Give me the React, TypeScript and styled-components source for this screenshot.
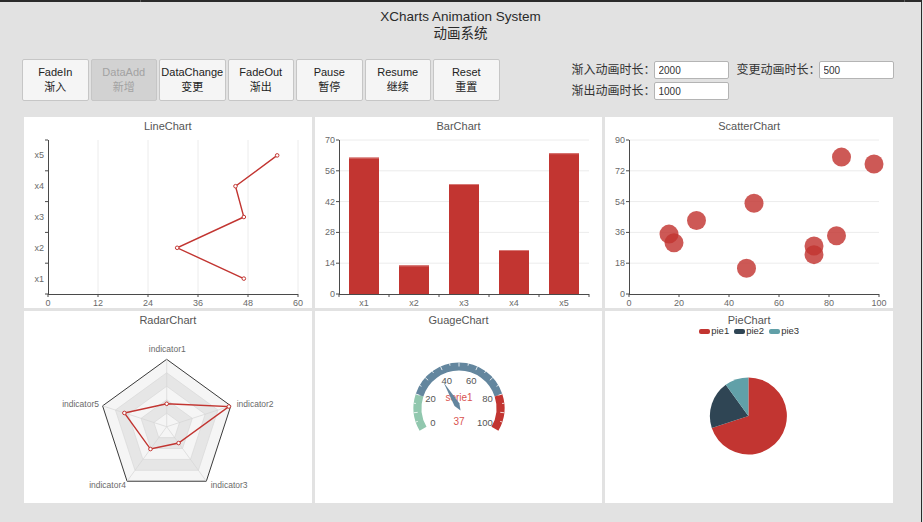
import React from "react";
import styled, { createGlobalStyle } from "styled-components";

const RED = "#c23531";
const NAVY = "#2f4554";
const TEAL = "#61a0a8";
const STEEL = "#63869e";
const MINT = "#91c7ae";
const FONT = `"Liberation Sans", Arial, "Noto Sans CJK SC", sans-serif`;

const GlobalStyle = createGlobalStyle`
  html, body {
    margin: 0;
    padding: 0;
    background: #e2e2e2;
    overflow: hidden;
  }
  body {
    font-family: ${FONT};
  }
`;

const Page = styled.div`
  width: 922px;
  height: 522px;
  border-right: 1px solid #2b2b2b;
  box-sizing: border-box;
  background: #e2e2e2;
`;

const TopStrip = styled.div`
  display: flex;
  height: 2px;
  background: #2b2b2b;
`;

const StripSegment = styled.div<{ $w: number }>`
  width: ${({ $w }) => $w}px;
  border-right: 1px solid #5a5a5a;
`;

const Header = styled.header`
  padding-top: 6px;
  text-align: center;
  font-size: 13.5px;
  line-height: 17px;
  color: #2a2a2a;
`;

const Controls = styled.div`
  display: flex;
  align-items: flex-start;
  margin-top: 17px;
  padding-left: 22px;
`;

const ButtonRow = styled.div`
  display: flex;
  gap: 2px;
`;

const ActionButton = styled.button`
  width: 66.5px;
  height: 42px;
  padding: 0;
  display: flex;
  flex-direction: column;
  align-items: center;
  justify-content: center;
  background: #f5f5f5;
  border: 1px solid #c6c6c6;
  border-radius: 2px;
  font-family: ${FONT};
  font-size: 11px;
  line-height: 15px;
  color: #222;

  &:disabled {
    background: #d2d2d2;
    color: #a2a2a2;
  }
`;

const Settings = styled.div`
  display: flex;
  flex-direction: column;
  gap: 3px;
  margin-left: 72px;
  margin-top: 2px;
`;

const SettingsRow = styled.div`
  display: flex;
  gap: 8px;
`;

const Field = styled.label`
  display: flex;
  align-items: center;
`;

const FieldLabel = styled.span`
  width: 82px;
  font-size: 12px;
  line-height: 18px;
  color: #333;
  white-space: nowrap;
`;

const FieldInput = styled.input`
  width: 75px;
  height: 18px;
  box-sizing: border-box;
  padding: 0 4px;
  border: 1px solid #b4b4b4;
  border-radius: 2px;
  background: #fff;
  font-family: ${FONT};
  font-size: 10px;
  color: #333;
  outline: none;
`;

const ChartGrid = styled.div`
  display: grid;
  grid-template-columns: repeat(3, 1fr);
  grid-template-rows: 191px 192px;
  gap: 3px;
  width: 869px;
  margin: 16px 0 0 24px;
`;

const Panel = styled.section`
  display: flex;
  flex-direction: column;
  min-width: 0;
  background: #fff;
  overflow: hidden;
`;

const PanelTitle = styled.h3`
  margin: 0;
  height: 18px;
  line-height: 18px;
  text-align: center;
  font-size: 11px;
  font-weight: normal;
  color: #555;
`;

const Legend = styled.div`
  display: flex;
  justify-content: center;
  gap: 5px;
  height: 10px;
  margin-top: -3px;
  font-size: 9.5px;
  line-height: 10px;
  color: #333;
`;

const LegendItem = styled.span`
  display: flex;
  align-items: center;
  gap: 1px;
`;

const Swatch = styled.i<{ $c: string }>`
  width: 11px;
  height: 5px;
  border-radius: 2px;
  background: ${({ $c }) => $c};
`;

const Plot = styled.svg`
  display: block;
  width: 100%;
  flex: 1;
  overflow: visible;
`;

const AxisText = styled.text`
  font-family: ${FONT};
  font-size: 9px;
  fill: #6a6a6a;
`;

const GaugeText = styled.text<{ $red?: boolean }>`
  font-family: ${FONT};
  font-size: ${({ $red }) => ($red ? 10 : 9.5)}px;
  fill: ${({ $red }) => ($red ? "#d9534f" : "#555")};
`;

// cartesian area shared by the three top charts (svg-local px)
const L = 24;
const R = 274;
const T = 5;
const B = 159;

const pt = (cx: number, cy: number, r: number, deg: number): [number, number] => {
  const a = (deg * Math.PI) / 180;
  return [cx + r * Math.sin(a), cy - r * Math.cos(a)];
};

const arc = (cx: number, cy: number, r: number, a0: number, a1: number) => {
  const [x0, y0] = pt(cx, cy, r, a0);
  const [x1, y1] = pt(cx, cy, r, a1);
  return `M${x0} ${y0} A${r} ${r} 0 ${a1 - a0 > 180 ? 1 : 0} 1 ${x1} ${y1}`;
};

const Axes = () => (
  <g stroke="#4a4a4a" strokeWidth={1}>
    <line x1={L} y1={B + 0.5} x2={R} y2={B + 0.5} />
    <line x1={L + 0.5} y1={T} x2={L + 0.5} y2={B} />
  </g>
);

const LineChart = () => {
  const vals = [47, 31, 47, 45, 55];
  const band = (B - T) / 5;
  const x = (v: number) => L + (v / 60) * (R - L);
  const y = (i: number) => B - (i + 0.5) * band;
  const pts = vals.map((v, i) => `${x(v)},${y(i)}`).join(" ");
  return (
    <Plot>
      {[12, 24, 36, 48, 60].map((v) => (
        <line key={v} x1={x(v)} y1={T} x2={x(v)} y2={B} stroke="#ececec" />
      ))}
      <Axes />
      {[0, 1, 2, 3, 4, 5].map((k) => (
        <line key={k} x1={L - 3} y1={B - k * band} x2={L} y2={B - k * band} stroke="#4a4a4a" />
      ))}
      {[0, 12, 24, 36, 48, 60].map((v) => (
        <g key={v}>
          <line x1={x(v)} y1={B} x2={x(v)} y2={B + 3} stroke="#4a4a4a" />
          <AxisText x={x(v)} y={B + 12} textAnchor="middle">{v}</AxisText>
        </g>
      ))}
      {vals.map((_, i) => (
        <AxisText key={i} x={L - 4} y={y(i) + 3} textAnchor="end">{`x${i + 1}`}</AxisText>
      ))}
      <polyline points={pts} fill="none" stroke={RED} strokeWidth={1.4} />
      {vals.map((v, i) => (
        <circle key={i} cx={x(v)} cy={y(i)} r={1.8} fill="#fff" stroke={RED} strokeWidth={1} />
      ))}
    </Plot>
  );
};

const BarChart = () => {
  const vals = [62, 13, 50, 20, 64];
  const band = (R - L) / 5;
  const y = (v: number) => B - (v / 70) * (B - T);
  return (
    <Plot>
      {[14, 28, 42, 56, 70].map((v) => (
        <line key={v} x1={L} y1={y(v)} x2={R} y2={y(v)} stroke="#ececec" />
      ))}
      {vals.map((v, i) => (
        <g key={i}>
          <rect x={L + i * band + 10} y={y(v)} width={30} height={B - y(v)} fill={RED} />
          <rect x={L + i * band + 10} y={y(v)} width={30} height={1} fill="#d77875" />
        </g>
      ))}
      <Axes />
      {[0, 14, 28, 42, 56, 70].map((v) => (
        <g key={v}>
          <line x1={L - 3} y1={y(v)} x2={L} y2={y(v)} stroke="#4a4a4a" />
          <AxisText x={L - 4} y={y(v) + 3} textAnchor="end">{v}</AxisText>
        </g>
      ))}
      {[0, 1, 2, 3, 4, 5].map((k) => (
        <line key={k} x1={L + k * band} y1={B} x2={L + k * band} y2={B + 3} stroke="#4a4a4a" />
      ))}
      {vals.map((_, i) => (
        <AxisText key={i} x={L + (i + 0.5) * band} y={B + 12} textAnchor="middle">{`x${i + 1}`}</AxisText>
      ))}
    </Plot>
  );
};

const ScatterChart = () => {
  const data: [number, number][] = [
    [16, 35], [18, 30], [27, 43], [50, 53], [47, 15],
    [74, 28], [74, 23], [83, 34], [85, 80], [98, 76],
  ];
  const x = (v: number) => L + (v / 100) * (R - L);
  const y = (v: number) => B - (v / 90) * (B - T);
  return (
    <Plot>
      {[18, 36, 54, 72, 90].map((v) => (
        <line key={v} x1={L} y1={y(v)} x2={R} y2={y(v)} stroke="#ececec" />
      ))}
      {data.map(([a, b], i) => (
        <circle key={i} cx={x(a)} cy={y(b)} r={9.5} fill={RED} fillOpacity={0.82} />
      ))}
      <Axes />
      {[0, 18, 36, 54, 72, 90].map((v) => (
        <g key={v}>
          <line x1={L - 3} y1={y(v)} x2={L} y2={y(v)} stroke="#4a4a4a" />
          <AxisText x={L - 4} y={y(v) + 3} textAnchor="end">{v}</AxisText>
        </g>
      ))}
      {[0, 20, 40, 60, 80, 100].map((v) => (
        <g key={v}>
          <line x1={x(v)} y1={B} x2={x(v)} y2={B + 3} stroke="#4a4a4a" />
          <AxisText x={x(v)} y={B + 12} textAnchor="middle">{v}</AxisText>
        </g>
      ))}
    </Plot>
  );
};

const RadarChart = () => {
  const cx = 142.7;
  const cy = 97.7;
  const r = 67.4;
  const angles = [0, 72, 144, 216, 288];
  const ring = (f: number) => angles.map((a) => pt(cx, cy, r * f, a).join(",")).join(" ");
  const vals = [0.34, 0.97, 0.3, 0.41, 0.66];
  const dataPts = vals.map((v, i) => pt(cx, cy, r * v, angles[i]));
  const labels: { text: string; x: number; y: number; anchor: "start" | "middle" | "end" }[] = [
    { text: "indicator1", x: 143.3, y: 23, anchor: "middle" },
    { text: "indicator2", x: 212.7, y: 78, anchor: "start" },
    { text: "indicator3", x: 186.7, y: 159, anchor: "start" },
    { text: "indicator4", x: 102, y: 159, anchor: "end" },
    { text: "indicator5", x: 75, y: 78, anchor: "end" },
  ];
  return (
    <Plot>
      {[5, 4, 3, 2, 1].map((k) => (
        <polygon
          key={k}
          points={ring(k / 5)}
          fill={k % 2 === 1 ? "#f5f5f5" : "#e6e6e6"}
          stroke={k === 5 ? "#3a3a3a" : "#d9d9d9"}
          strokeWidth={k === 5 ? 1 : 0.7}
        />
      ))}
      {angles.map((a) => {
        const [x2, y2] = pt(cx, cy, r, a);
        return <line key={a} x1={cx} y1={cy} x2={x2} y2={y2} stroke="#d6d6d6" strokeWidth={0.7} />;
      })}
      <polygon points={dataPts.map((p) => p.join(",")).join(" ")} fill="none" stroke={RED} strokeWidth={1.4} />
      {dataPts.map(([x, y], i) => (
        <circle key={i} cx={x} cy={y} r={1.8} fill="#fff" stroke={RED} strokeWidth={1} />
      ))}
      {labels.map((l) => (
        <AxisText key={l.text} x={l.x} y={l.y} textAnchor={l.anchor} style={{ fontSize: 8.5 }}>
          {l.text}
        </AxisText>
      ))}
    </Plot>
  );
};

const GaugeChart = () => {
  const cx = 144;
  const cy = 79;
  const ro = 45.5;
  const width = 8;
  const rm = ro - width / 2;
  const ang = (v: number) => -120 + (v / 100) * 240;
  const ticks = Array.from({ length: 19 }, (_, i) => (i + 1) * 5);
  const value = 37;
  const pa = ang(value);
  return (
    <Plot>
      <path d={arc(cx, cy, rm, ang(0), ang(20))} fill="none" stroke={MINT} strokeWidth={width} />
      <path d={arc(cx, cy, rm, ang(20), ang(80))} fill="none" stroke={STEEL} strokeWidth={width} />
      <path d={arc(cx, cy, rm, ang(80), ang(100))} fill="none" stroke={RED} strokeWidth={width} />
      {ticks.map((v) => {
        const major = v % 10 === 0;
        const [x1, y1] = pt(cx, cy, ro, ang(v));
        const [x2, y2] = pt(cx, cy, ro - (major ? 4 : 2.2), ang(v));
        return <line key={v} x1={x1} y1={y1} x2={x2} y2={y2} stroke="#fff" strokeWidth={0.8} />;
      })}
      {[0, 20, 40, 60, 80, 100].map((v) => {
        const [x, y] = pt(cx, cy, 30, ang(v));
        return (
          <GaugeText key={v} x={x} y={y + 3.4} textAnchor="middle">{v}</GaugeText>
        );
      })}
      <GaugeText $red x={cx} y={72} textAnchor="middle">serie1</GaugeText>
      <g transform={`rotate(${pa} ${cx} ${cy})`}>
        <polygon
          points={`${cx},${cy - 30} ${cx + 2.8},${cy - 4} ${cx},${cy + 3} ${cx - 2.8},${cy - 4}`}
          fill={STEEL}
        />
      </g>
      <GaugeText $red x={cx} y={96} textAnchor="middle">{value}</GaugeText>
    </Plot>
  );
};

const PieChart = () => {
  const cx = 143.4;
  const cy = 80;
  const r = 38.5;
  const slices = [
    { v: 70, c: RED },
    { v: 20, c: NAVY },
    { v: 10, c: TEAL },
  ];
  let acc = 0;
  return (
    <Plot>
      {slices.map((s, i) => {
        const a0 = (acc / 100) * 360;
        acc += s.v;
        const a1 = (acc / 100) * 360;
        const [x0, y0] = pt(cx, cy, r, a0);
        const [x1, y1] = pt(cx, cy, r, a1);
        const d = `M${cx} ${cy} L${x0} ${y0} A${r} ${r} 0 ${a1 - a0 > 180 ? 1 : 0} 1 ${x1} ${y1} Z`;
        return <path key={i} d={d} fill={s.c} />;
      })}
    </Plot>
  );
};

const buttons = [
  { en: "FadeIn", zh: "渐入" },
  { en: "DataAdd", zh: "新增", disabled: true },
  { en: "DataChange", zh: "变更" },
  { en: "FadeOut", zh: "渐出" },
  { en: "Pause", zh: "暂停" },
  { en: "Resume", zh: "继续" },
  { en: "Reset", zh: "重置" },
];

export default function App() {
  return (
    <>
      <GlobalStyle />
      <Page>
        <TopStrip>
          <StripSegment $w={140} />
          <StripSegment $w={763} />
        </TopStrip>
        <Header>
          <div>XCharts Animation System</div>
          <div>动画系统</div>
        </Header>
        <Controls>
          <ButtonRow>
            {buttons.map((b) => (
              <ActionButton key={b.en} disabled={b.disabled}>
                <span>{b.en}</span>
                <span>{b.zh}</span>
              </ActionButton>
            ))}
          </ButtonRow>
          <Settings>
            <SettingsRow>
              <Field>
                <FieldLabel>渐入动画时长：</FieldLabel>
                <FieldInput defaultValue="2000" />
              </Field>
              <Field>
                <FieldLabel>变更动画时长：</FieldLabel>
                <FieldInput defaultValue="500" />
              </Field>
            </SettingsRow>
            <SettingsRow>
              <Field>
                <FieldLabel>渐出动画时长：</FieldLabel>
                <FieldInput defaultValue="1000" />
              </Field>
            </SettingsRow>
          </Settings>
        </Controls>
        <ChartGrid>
          <Panel>
            <PanelTitle>LineChart</PanelTitle>
            <LineChart />
          </Panel>
          <Panel>
            <PanelTitle>BarChart</PanelTitle>
            <BarChart />
          </Panel>
          <Panel>
            <PanelTitle>ScatterChart</PanelTitle>
            <ScatterChart />
          </Panel>
          <Panel>
            <PanelTitle>RadarChart</PanelTitle>
            <RadarChart />
          </Panel>
          <Panel>
            <PanelTitle>GuageChart</PanelTitle>
            <GaugeChart />
          </Panel>
          <Panel>
            <PanelTitle>PieChart</PanelTitle>
            <Legend>
              <LegendItem><Swatch $c={RED} />pie1</LegendItem>
              <LegendItem><Swatch $c={NAVY} />pie2</LegendItem>
              <LegendItem><Swatch $c={TEAL} />pie3</LegendItem>
            </Legend>
            <PieChart />
          </Panel>
        </ChartGrid>
      </Page>
    </>
  );
}
